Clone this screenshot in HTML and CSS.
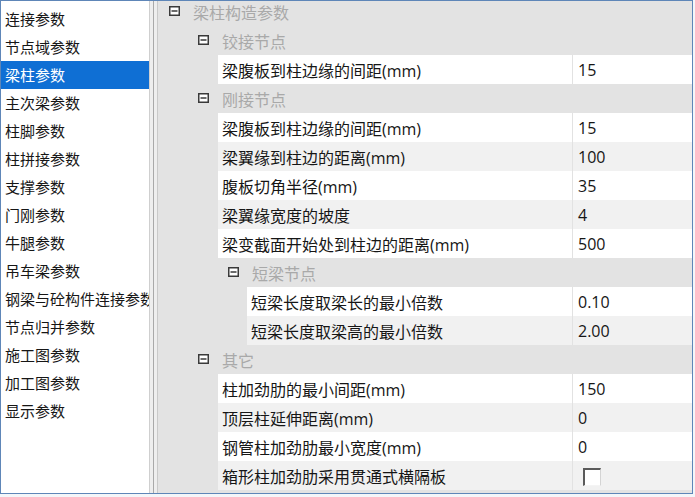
FILE: index.html
```html
<!DOCTYPE html>
<html>
<head>
<meta charset="utf-8">
<link rel="stylesheet" href="styles.css">
</head>
<body>
<div class="frame">
  <ul class="nav">
    <li>连接参数</li>
    <li>节点域参数</li>
    <li class="sel">梁柱参数</li>
    <li>主次梁参数</li>
    <li>柱脚参数</li>
    <li>柱拼接参数</li>
    <li>支撑参数</li>
    <li>门刚参数</li>
    <li>牛腿参数</li>
    <li>吊车梁参数</li>
    <li>钢梁与砼构件连接参数</li>
    <li>节点归并参数</li>
    <li>施工图参数</li>
    <li>加工图参数</li>
    <li>显示参数</li>
  </ul>
  <div class="splitter"></div>
  <div class="grid">
    <div class="rows">
      <div class="cat l1"><svg class="exp" viewBox="0 0 11 10"><rect x="0.75" y="0.75" width="9.5" height="8.5" fill="#fff" stroke="#3a3a3a" stroke-width="1.5"/><line x1="2.5" y1="5" x2="8.5" y2="5" stroke="#3a3a3a" stroke-width="1.5"/></svg><span>梁柱构造参数</span></div>

      <div class="cat l2"><svg class="exp" viewBox="0 0 11 10"><rect x="0.75" y="0.75" width="9.5" height="8.5" fill="#fff" stroke="#3a3a3a" stroke-width="1.5"/><line x1="2.5" y1="5" x2="8.5" y2="5" stroke="#3a3a3a" stroke-width="1.5"/></svg><span>铰接节点</span></div>
      <div class="prop l2"><div class="name">梁腹板到柱边缘的间距(mm)</div><div class="val">15</div></div>

      <div class="cat l2"><svg class="exp" viewBox="0 0 11 10"><rect x="0.75" y="0.75" width="9.5" height="8.5" fill="#fff" stroke="#3a3a3a" stroke-width="1.5"/><line x1="2.5" y1="5" x2="8.5" y2="5" stroke="#3a3a3a" stroke-width="1.5"/></svg><span>刚接节点</span></div>
      <div class="prop l2"><div class="name">梁腹板到柱边缘的间距(mm)</div><div class="val">15</div></div>
      <div class="prop l2 alt"><div class="name">梁翼缘到柱边的距离(mm)</div><div class="val">100</div></div>
      <div class="prop l2"><div class="name">腹板切角半径(mm)</div><div class="val">35</div></div>
      <div class="prop l2 alt"><div class="name">梁翼缘宽度的坡度</div><div class="val">4</div></div>
      <div class="prop l2"><div class="name">梁变截面开始处到柱边的距离(mm)</div><div class="val">500</div></div>

      <div class="cat l3"><svg class="exp" viewBox="0 0 11 10"><rect x="0.75" y="0.75" width="9.5" height="8.5" fill="#fff" stroke="#3a3a3a" stroke-width="1.5"/><line x1="2.5" y1="5" x2="8.5" y2="5" stroke="#3a3a3a" stroke-width="1.5"/></svg><span>短梁节点</span></div>
      <div class="prop l3"><div class="name">短梁长度取梁长的最小倍数</div><div class="val">0.10</div></div>
      <div class="prop l3 alt"><div class="name">短梁长度取梁高的最小倍数</div><div class="val">2.00</div></div>

      <div class="cat l2"><svg class="exp" viewBox="0 0 11 10"><rect x="0.75" y="0.75" width="9.5" height="8.5" fill="#fff" stroke="#3a3a3a" stroke-width="1.5"/><line x1="2.5" y1="5" x2="8.5" y2="5" stroke="#3a3a3a" stroke-width="1.5"/></svg><span>其它</span></div>
      <div class="prop l2"><div class="name">柱加劲肋的最小间距(mm)</div><div class="val">150</div></div>
      <div class="prop l2 alt"><div class="name">顶层柱延伸距离(mm)</div><div class="val">0</div></div>
      <div class="prop l2"><div class="name">钢管柱加劲肋最小宽度(mm)</div><div class="val">0</div></div>
      <div class="prop l2 alt"><div class="name">箱形柱加劲肋采用贯通式横隔板</div><div class="val"><span class="check"></span></div></div>
    </div>
  </div>
</div>
</body>
</html>
```

FILE: styles.css
```css
* { box-sizing: border-box; }
html, body {
  margin: 0;
  padding: 0;
  background: #f4f6f9;
}
body {
  width: 695px;
  height: 497px;
  font-family: "Open Sans", "Noto Sans CJK SC", sans-serif;
  color: #161616;
}
.frame {
  width: 693px;
  height: 494px;
  border: 1px solid #5e86b8;
  display: flex;
  overflow: hidden;
  background: #fff;
}
.nav {
  list-style: none;
  margin: 0;
  padding: 4px 0 0 0;
  width: 148px;
  flex: none;
  background: #fff;
  overflow: hidden;
}
.nav li {
  height: 28px;
  line-height: 28px;
  padding-left: 4px;
  font-size: 15px;
  white-space: nowrap;
}
.nav li.sel {
  background: #0f6fd4;
  color: #fff;
}
.splitter {
  width: 9px;
  flex: none;
  background: #eeeeee;
  border-left: 1px solid #cfcfcf;
  border-right: 1px solid #c9c9c9;
  position: relative;
}
.splitter::after {
  content: "";
  position: absolute;
  left: 3px;
  top: 0;
  bottom: 0;
  width: 1px;
  background: #a9a9a9;
}
.grid {
  flex: 1;
  background: #e3e3e3;
  overflow: hidden;
}
.rows {
  margin-top: -4px;
}
.cat, .prop {
  height: 29px;
  display: flex;
  align-items: center;
  font-size: 16px;
  white-space: nowrap;
}
.cat {
  color: #a9a9a9;
}
.cat .exp {
  width: 11px;
  height: 10px;
  flex: none;
  margin-right: 13px;
  margin-top: -2px;
}
.cat.l1 { padding-left: 11px; }
.cat.l2 { padding-left: 40px; }
.cat.l3 { padding-left: 70px; }
.prop {
  background: #ffffff;
  align-items: stretch;
}
.prop.alt { background: #f1f1f1; }
.prop.l2 { margin-left: 60px; }
.prop.l3 { margin-left: 89px; }
.prop .name {
  flex: 1;
  padding-left: 4px;
  display: flex;
  align-items: center;
  overflow: hidden;
}
.prop .val {
  width: 120px;
  flex: none;
  border-left: 1px solid #e2e2e2;
  padding-left: 5px;
  display: flex;
  align-items: center;
}
.check {
  width: 18px;
  height: 18px;
  margin-left: 5px;
  margin-top: 2px;
  background: #fff;
  border-top: 2px solid #5a5a5a;
  border-left: 2px solid #5a5a5a;
  border-right: 1px solid #d4d4d4;
  border-bottom: 1px solid #f4f4f4;
}
```
